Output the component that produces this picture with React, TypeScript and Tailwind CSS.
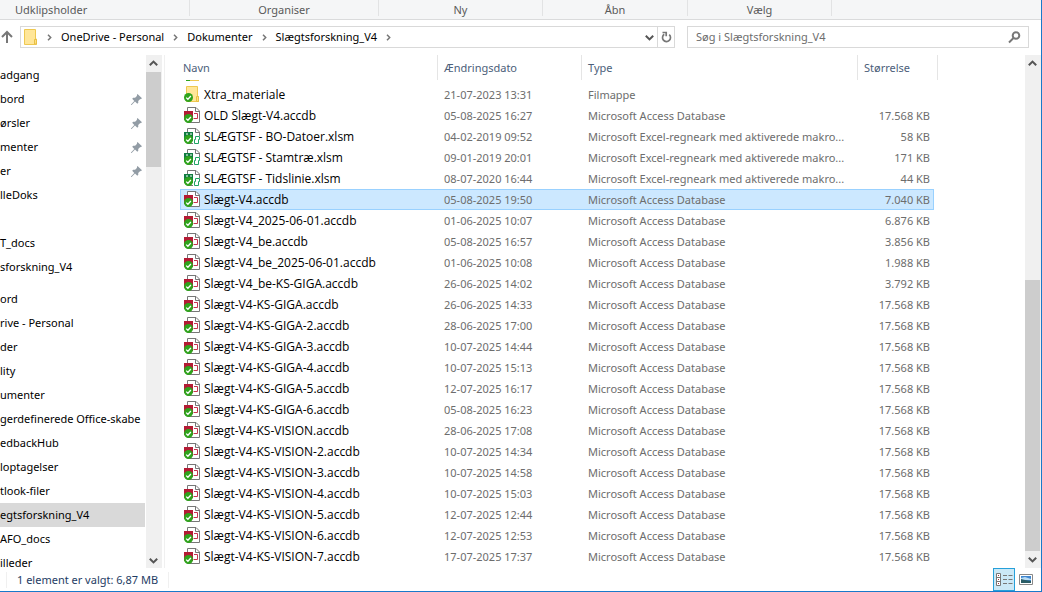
import React, { useState } from 'react';

type FileKind = 'folder' | 'access' | 'excel';

interface FileRow {
    name: string;
    date: string;
    kind: FileKind;
    size: string;
}

interface NavItem {
    label: string;
    pinned?: boolean;
    gap?: boolean;
    current?: boolean;
}

const typeNames: Record<FileKind, string> = {
    folder: 'Filmappe',
    access: 'Microsoft Access Database',
    excel: 'Microsoft Excel-regneark med aktiverede makro...',
};

const files: FileRow[] = [
    { name: 'Xtra_materiale', date: '21-07-2023 13:31', kind: 'folder', size: '' },
    { name: 'OLD Slægt-V4.accdb', date: '05-08-2025 16:27', kind: 'access', size: '17.568 KB' },
    { name: 'SLÆGTSF - BO-Datoer.xlsm', date: '04-02-2019 09:52', kind: 'excel', size: '58 KB' },
    { name: 'SLÆGTSF - Stamtræ.xlsm', date: '09-01-2019 20:01', kind: 'excel', size: '171 KB' },
    { name: 'SLÆGTSF - Tidslinie.xlsm', date: '08-07-2020 16:44', kind: 'excel', size: '44 KB' },
    { name: 'Slægt-V4.accdb', date: '05-08-2025 19:50', kind: 'access', size: '7.040 KB' },
    { name: 'Slægt-V4_2025-06-01.accdb', date: '01-06-2025 10:07', kind: 'access', size: '6.876 KB' },
    { name: 'Slægt-V4_be.accdb', date: '05-08-2025 16:57', kind: 'access', size: '3.856 KB' },
    { name: 'Slægt-V4_be_2025-06-01.accdb', date: '01-06-2025 10:08', kind: 'access', size: '1.988 KB' },
    { name: 'Slægt-V4_be-KS-GIGA.accdb', date: '26-06-2025 14:02', kind: 'access', size: '3.792 KB' },
    { name: 'Slægt-V4-KS-GIGA.accdb', date: '26-06-2025 14:33', kind: 'access', size: '17.568 KB' },
    { name: 'Slægt-V4-KS-GIGA-2.accdb', date: '28-06-2025 17:00', kind: 'access', size: '17.568 KB' },
    { name: 'Slægt-V4-KS-GIGA-3.accdb', date: '10-07-2025 14:44', kind: 'access', size: '17.568 KB' },
    { name: 'Slægt-V4-KS-GIGA-4.accdb', date: '10-07-2025 15:13', kind: 'access', size: '17.568 KB' },
    { name: 'Slægt-V4-KS-GIGA-5.accdb', date: '12-07-2025 16:17', kind: 'access', size: '17.568 KB' },
    { name: 'Slægt-V4-KS-GIGA-6.accdb', date: '05-08-2025 16:23', kind: 'access', size: '17.568 KB' },
    { name: 'Slægt-V4-KS-VISION.accdb', date: '28-06-2025 17:08', kind: 'access', size: '17.568 KB' },
    { name: 'Slægt-V4-KS-VISION-2.accdb', date: '10-07-2025 14:34', kind: 'access', size: '17.568 KB' },
    { name: 'Slægt-V4-KS-VISION-3.accdb', date: '10-07-2025 14:58', kind: 'access', size: '17.568 KB' },
    { name: 'Slægt-V4-KS-VISION-4.accdb', date: '10-07-2025 15:03', kind: 'access', size: '17.568 KB' },
    { name: 'Slægt-V4-KS-VISION-5.accdb', date: '12-07-2025 12:44', kind: 'access', size: '17.568 KB' },
    { name: 'Slægt-V4-KS-VISION-6.accdb', date: '12-07-2025 12:53', kind: 'access', size: '17.568 KB' },
    { name: 'Slægt-V4-KS-VISION-7.accdb', date: '17-07-2025 17:37', kind: 'access', size: '17.568 KB' },
];

const navItems: NavItem[] = [
    { label: 'adgang' },
    { label: 'bord', pinned: true },
    { label: 'ørsler', pinned: true },
    { label: 'menter', pinned: true },
    { label: 'er', pinned: true },
    { label: 'lleDoks' },
    { label: '' },
    { label: 'T_docs' },
    { label: 'sforskning_V4' },
    { label: 'ord', gap: true },
    { label: 'rive - Personal' },
    { label: 'der' },
    { label: 'lity' },
    { label: 'umenter' },
    { label: 'gerdefinerede Office-skabe' },
    { label: 'edbackHub' },
    { label: 'loptagelser' },
    { label: 'tlook-filer' },
    { label: 'egtsforskning_V4', current: true },
    { label: 'AFO_docs' },
    { label: 'illeder' },
];

const crumbs = ['OneDrive - Personal', 'Dokumenter', 'Slægtsforskning_V4'];

const FolderIcon = () => (
    <svg width="14" height="16" viewBox="0 0 14 16" className="shrink-0" aria-hidden="true">
        <path d="M.5.5h11v9.5h1v5.5H.5z" fill="#ffe699" stroke="#eec851" />
        <path d="M10.500 15V10.500h2V15z" fill="#ffe080" stroke="#e8bf45" />
    </svg>
);

const FileIcon = ({ kind }: { kind: FileKind }) => (
    <svg width="16" height="17" viewBox="0 0 16 17" className="shrink-0" aria-hidden="true">
        {kind === 'folder' ? (
            <>
                <path d="M2.500.5h11v10h1v5h-12z" fill="#ffe699" stroke="#eec851" />
                <path d="M12.500 15.500v-5h2v5z" fill="#ffe080" stroke="#e8bf45" />
            </>
        ) : (
            <>
                <path d="M3.500.5h8.500l3.500 3.500v11.500h-12z" fill="#fff" stroke="#777" />
                <path d="M11.500.5V4.500h4" fill="none" stroke="#777" />
            </>
        )}
        {kind === 'access' && (
            <>
                <path d="M10 6.500h3.500v5H9.500" fill="none" stroke="#c8344e" />
                <path d="M0 4h9v9H0z" fill="#b31b34" />
            </>
        )}
        {kind === 'excel' && (
            <>
                <path d="M9 8h7v9H9z" fill="#fff" />
                <path d="M10.500 15.500v-4h1v-3h4v3h-1v4z" fill="#fff" stroke="#21a366" />
                <path d="M0 4h9v9H0z" fill="#107c41" />
                <path d="M2 6h2M6 6h2" stroke="#fff" />
            </>
        )}
        <circle cx="4.500" cy="11.500" r="4.500" fill="#2fa31c" />
        <path d="M2.200 11.600l1.700 1.700 3-3.300" fill="none" stroke="#fff" strokeWidth="1.300" />
    </svg>
);

const Chevron = ({ dir }: { dir: 'up' | 'down' | 'right' }) => (
    <svg width="9" height="9" viewBox="0 0 9 9" className="shrink-0" fill="none" stroke={dir === 'right' ? '#767676' : '#555'} strokeWidth={dir === 'right' ? 1.5 : 2} aria-hidden="true">
        {dir === 'up' && <path d="M.8 6.300l3.700-3.700 3.700 3.700" />}
        {dir === 'down' && <path d="M.8 2.700l3.700 3.700 3.700-3.700" />}
        {dir === 'right' && <path d="M3 1.800l2.700 2.700L3 7.200" />}
    </svg>
);

const PinIcon = () => (
    <svg width="11" height="11" viewBox="0 0 11 11" className="shrink-0" fill="#929ca5" aria-hidden="true">
        <path d="M6.500 0L11 4.300l-1 .7-1 .2-1.800 1.800.1 1.800-1 1L4 7.500.6 11H0v-.6L3.300 7 1.200 4.700l1-1 1.900.1L5.900 2 6 .8z" />
    </svg>
);

const App: React.FC = () => {
    const [selected, setSelected] = useState('Slægt-V4.accdb');
    const [search, setSearch] = useState('');

    return (
        <div className="h-screen flex flex-col overflow-hidden bg-white border-r border-b border-[#1979ca] text-black text-[11px] leading-4 whitespace-nowrap font-['Noto_Sans','Open_Sans',sans-serif]">
            {/* Ribbon group names */}
            <div className="flex h-5 shrink-0 bg-[#f5f6f7] border-b border-[#dadbdc] text-[#5a5a5a] text-center pb-[3px]">
                <div className="w-[190px] border-r border-[#e2e3e4] pl-[15px] text-left pt-0.5">Udklipsholder</div>
                <div className="w-[189px] border-r border-[#e2e3e4] pt-0.5">Organiser</div>
                <div className="w-[164px] border-r border-[#e2e3e4] pt-0.5">Ny</div>
                <div className="w-[145px] border-r border-[#e2e3e4] pt-0.5">Åbn</div>
                <div className="w-[144px] border-r border-[#e2e3e4] pt-0.5">Vælg</div>
            </div>

            {/* Address bar */}
            <div className="flex items-start h-[35px] shrink-0 pt-1.5 pr-3">
                <button aria-label="Op" className="w-5 h-[22px] flex items-center justify-start">
                    <svg width="14" height="14" viewBox="0 0 14 14" fill="none" stroke="#777" strokeWidth="2">
                        <path d="M7 13V2M2 7l5-5 5 5" />
                    </svg>
                </button>
                <div className="flex flex-1 items-center h-[22px] border border-[#d9d9d9] pl-[3px]">
                    <FolderIcon />
                    {crumbs.map((crumb) => (
                        <React.Fragment key={crumb}>
                            <span className="w-[23px] flex justify-center"><Chevron dir="right" /></span>
                            <button>{crumb}</button>
                        </React.Fragment>
                    ))}
                    <span className="w-[23px] flex justify-center"><Chevron dir="right" /></span>
                    <button aria-label="Tidligere placeringer" className="ml-auto mr-[3px]">
                        <Chevron dir="down" />
                    </button>
                    <button aria-label="Opdater" className="w-[17px] h-full border-l border-[#d9d9d9] flex items-center justify-center">
                        <svg width="11" height="12" viewBox="0 0 11 12" fill="none" stroke="#777" strokeWidth="1.700">
                            <path d="M8.200 3.600A4 4 0 1 1 3.200 3.300" />
                            <path d="M1.500 1.500h3.700v3.700" />
                        </svg>
                    </button>
                </div>
                <div className="flex items-center w-[342px] h-[22px] ml-3 border border-[#d9d9d9] pl-2 pr-[7px]">
                    <input
                        aria-label="Søg"
                        value={search}
                        onChange={(e) => setSearch(e.target.value)}
                        placeholder="Søg i Slægtsforskning_V4"
                        className="flex-1 min-w-0 outline-none placeholder:text-[#6d6d6d]"
                    />
                    <svg width="13" height="13" viewBox="0 0 13 13" fill="none" stroke="#777" strokeWidth="2" aria-hidden="true">
                        <circle cx="8" cy="4.500" r="3.300" />
                        <path d="M5.500 7L1 11.500" />
                    </svg>
                </div>
            </div>

            <div className="flex flex-1 min-h-0">
                {/* Navigation pane */}
                <nav className="w-[145px] overflow-hidden pt-2">
                    {navItems.map((item, i) => (
                        <a
                            key={i}
                            href="#"
                            className={`flex items-center justify-between h-6 pr-[3px] ${item.gap ? 'mt-2' : ''} ${item.current ? 'bg-[#d9d9d9]' : ''}`}
                        >
                            <span>{item.label}</span>
                            {item.pinned && <PinIcon />}
                        </a>
                    ))}
                </nav>
                <div className="w-4 ml-px bg-[#f0f0f0] flex flex-col items-start">
                    <div className="w-full h-[17px] pr-px flex items-center justify-center"><Chevron dir="up" /></div>
                    <div className="w-[15px] h-[95px] bg-[#cdcdcd]" />
                    <div className="w-full h-4 pr-px mt-auto flex items-center justify-center"><Chevron dir="down" /></div>
                </div>
                <div className="w-4 ml-0.5 border-l border-[#f0f0f0]" />

                {/* File list */}
                <main className="flex-1 min-w-0 overflow-hidden">
                    <table className="table-fixed border-separate border-spacing-0 w-[758px]">
                        <colgroup>
                            <col className="w-[258px]" />
                            <col className="w-[144px]" />
                            <col className="w-[276px]" />
                            <col className="w-[76px]" />
                            <col className="w-1" />
                        </colgroup>
                        <thead>
                            <tr className="h-[25px] text-left text-[#4c607a]">
                                <th className="font-normal p-0 pl-[3px] border-r border-[#e5e5e5]">Navn</th>
                                <th className="font-normal p-0 pl-1.5 border-r border-[#e5e5e5]">Ændringsdato</th>
                                <th className="font-normal p-0 pl-1.5 border-r border-[#e5e5e5]">Type</th>
                                <th colSpan={2} className="font-normal p-0 pl-1.5 border-r border-[#e5e5e5]">Størrelse</th>
                            </tr>
                        </thead>
                        <tbody>
                            <tr className="h-1">
                                <td colSpan={5} className="p-0">
                                    <div className="h-1 pl-1.5"><div className="w-[13px] h-px bg-[#eec851] border-l-4 border-[#2fa31c]" /></div>
                                </td>
                            </tr>
                            {files.map((file) => {
                                const cell = file.name === selected ? 'bg-[#cce8ff] border-[#99d1ff]' : 'border-transparent';
                                return (
                                    <tr key={file.name} onClick={() => setSelected(file.name)} className="h-[21px] text-[#6d6d6d]">
                                        <td className={`p-0 border-y border-l text-black text-[12px] font-['Open_Sans','Noto_Sans',sans-serif] ${cell}`}>
                                            <div className="flex items-center gap-1 pl-[3px]">
                                                <FileIcon kind={file.kind} />
                                                {file.name}
                                            </div>
                                        </td>
                                        <td className={`p-0 pl-1.5 border-y ${cell}`}>{file.date}</td>
                                        <td className={`p-0 pl-1.5 border-y ${cell}`}>{typeNames[file.kind]}</td>
                                        <td className={`p-0 pr-[3px] border-y border-r text-right ${cell}`}>{file.size}</td>
                                        <td className="p-0" />
                                    </tr>
                                );
                            })}
                        </tbody>
                    </table>
                </main>
                <div className="w-4 bg-[#f0f0f0] flex flex-col">
                    <div className="h-[17px] pr-px flex items-center justify-center"><Chevron dir="up" /></div>
                    <div className="w-[15px] h-[271px] mt-auto bg-[#cdcdcd]" />
                    <div className="h-[17px] pr-px flex items-center justify-center"><Chevron dir="down" /></div>
                </div>
            </div>

            {/* Status bar */}
            <footer className="flex items-center h-[23px] shrink-0 pl-1.5 text-[#1e3c64]">
                <div className="border-x border-[#f0f0f0] px-2.5">1 element er valgt: 6,87 MB</div>
                <button aria-label="Detaljer" className="ml-auto w-[22px] h-[23px] border border-[#26a0da] bg-[#cbe8f6] flex items-center justify-center">
                    <svg width="17" height="13" viewBox="0 0 17 13" fill="none" stroke="#777">
                        <path d="M.5.5h4v12h-4zM.5 4.500h4M.5 8.500h4" fill="#fff" />
                        <path d="M7 2.500h4M12.500 2.500h4M7 6.500h4M12.500 6.500h4M7 10.500h4M12.500 10.500h4" />
                        <path d="M2 2.500h1M2 6.500h1M2 10.500h1" stroke="#a33" />
                    </svg>
                </button>
                <button aria-label="Store miniaturer" className="w-[26px] flex justify-start pl-1">
                    <svg width="14" height="11" viewBox="0 0 14 11">
                        <path d="M.5.5h13v10H.5z" fill="#fff" stroke="#888" />
                        <path d="M2 2h10v7H2z" fill="#3f86cf" />
                        <path d="M2 4l4-1 6 2v1H2z" fill="#b9dcf5" />
                        <path d="M2 5l4 1 6 1v2H2z" fill="#2b5d66" />
                    </svg>
                </button>
            </footer>
        </div>
    );
};

export default App;
